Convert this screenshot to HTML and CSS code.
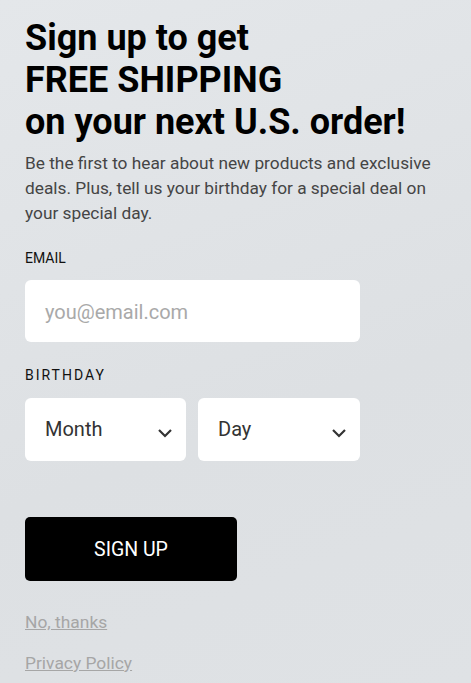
FILE: index.html
```html
<!DOCTYPE html>
<html>
<head>
<meta charset="utf-8">
<link rel="stylesheet" href="styles.css">
</head>
<body>
<div class="page">
  <h1 class="title">Sign up to get<br>FREE SHIPPING<br>on your next U.S. order!</h1>
  <p class="intro">Be the first to hear about new products and exclusive deals. Plus, tell us your birthday for a special deal on your special day.</p>
  <div class="label email-label">EMAIL</div>
  <div class="input"><span class="placeholder">you@email.com</span></div>
  <div class="label bday-label">BIRTHDAY</div>
  <div class="selects">
    <div class="select"><span>Month</span><svg class="chev" width="16" height="10" viewBox="0 0 16 10"><path d="M2 2 L8 8 L14 2" fill="none" stroke="#333" stroke-width="2.2"/></svg></div>
    <div class="select select-day"><span>Day</span><svg class="chev" width="16" height="10" viewBox="0 0 16 10"><path d="M2 2 L8 8 L14 2" fill="none" stroke="#333" stroke-width="2.2"/></svg></div>
  </div>
  <div class="button">SIGN UP</div>
  <a class="link no-thanks">No, thanks</a>
  <a class="link privacy">Privacy Policy</a>
</div>
</body>
</html>
```
FILE: styles.css
```css
html, body {
  margin: 0;
  padding: 0;
  height: 100%;
}
body {
  background: linear-gradient(160deg, #e4e7ea 0%, #dde0e3 60%, #dfe2e5 100%);
  font-family: Roboto, "Noto Sans", sans-serif;
  overflow: hidden;
}
.page {
  padding: 17px 25px 0 25px;
  display: flex;
  flex-direction: column;
  align-items: flex-start;
}
.title {
  margin: 0;
  font-size: 36px;
  line-height: 42px;
  font-weight: 700;
  color: #000;
}
.intro {
  margin: 8px 0 0 0;
  font-size: 17.3px;
  line-height: 25px;
  color: #454545;
  width: 420px;
}
.label {
  font-size: 14px;
  color: #111;
  line-height: 16px;
}
.email-label {
  margin-top: 24px;
}
.bday-label {
  margin-top: 25px;
  letter-spacing: 2px;
}
.input {
  margin-top: 14px;
  width: 335px;
  height: 62px;
  background: #fff;
  border-radius: 6px;
  box-sizing: border-box;
  padding-left: 20px;
  display: flex;
  align-items: center;
}
.placeholder {
  font-size: 20px;
  color: #a9a9a9;
  margin-top: 1px;
}
.selects {
  margin-top: 15px;
  display: flex;
  gap: 12px;
}
.select {
  width: 161px;
  height: 63px;
  background: #fff;
  border-radius: 6px;
  box-sizing: border-box;
  padding: 0 13px 0 20px;
  display: flex;
  align-items: center;
  justify-content: space-between;
  font-size: 20px;
  color: #333;
}
.select-day {
  width: 162px;
}
.select span {
  margin-top: -1px;
}
.chev {
  margin-top: 6px;
}
.button {
  margin-top: 56px;
  width: 212px;
  height: 64px;
  background: #000;
  border-radius: 5px;
  color: #fff;
  font-size: 19.5px;
  display: flex;
  align-items: center;
  justify-content: center;
}
.link {
  font-size: 17.4px;
  color: #a6a6a6;
  text-decoration: underline;
  line-height: 22px;
}
.no-thanks {
  margin-top: 30px;
}
.privacy {
  margin-top: 19px;
}
```
